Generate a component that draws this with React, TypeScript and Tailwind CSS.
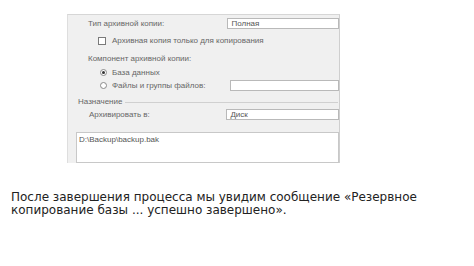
import React from 'react';

const Box: React.FC<{ w: string; children?: React.ReactNode }> = ({ w, children }) => (
  <div className={`${w} h-[11px] bg-white border border-[#b9b9b9] pl-[3px] flex items-center text-[#555]`}>
    {children}
  </div>
);

const Radio: React.FC<{ checked?: boolean }> = ({ checked }) => (
  <div className="w-[7px] h-[7px] rounded-full border border-[#8a8a8a] bg-white flex items-center justify-center">
    {checked && <div className="w-[3px] h-[3px] rounded-full bg-[#333]" />}
  </div>
);

const App: React.FC = () => {
  return (
    <div className="w-[474px] h-[266px] bg-white overflow-hidden">
      <div className="ml-[67px] mt-[14px] w-[273px] h-[149px] bg-[#f0f0f0] border-t border-l border-r border-t-[#d6d6d6] border-l-[#dedede] border-r-[#cfcfcf] flex flex-col text-[8px] leading-none text-[#666] font-['Liberation_Sans',sans-serif]">
        {/* archive type */}
        <div className="mt-[3px] flex items-center">
          <span className="w-[160px] pl-[20px]">Тип архивной копии:</span>
          <Box w="w-[112px]">Полная</Box>
        </div>
        <div className="mt-[7px] h-[9px] pl-[30px] flex items-center">
          <div className="w-[8px] h-[8px] border border-[#7a7a7a] bg-white" />
          <span className="ml-[6px]">Архивная копия только для копирования</span>
        </div>

        {/* component */}
        <div className="mt-[10px] pl-[20px]">Компонент архивной копии:</div>
        <div className="mt-[5px] h-[9px] pl-[32px] flex items-center">
          <Radio checked />
          <span className="ml-[5px]">База данных</span>
        </div>
        <div className="mt-[3px] flex items-center">
          <div className="w-[163px] pl-[32px] flex items-center">
            <Radio />
            <span className="ml-[5px]">Файлы и группы файлов:</span>
          </div>
          <Box w="w-[109px]" />
        </div>

        {/* destination */}
        <div className="mt-[7px] flex items-center pr-[1px]">
          <span className="pl-[10px] pr-[3px]">Назначение</span>
          <div className="flex-1 h-px bg-[#d0d0d0]" />
        </div>
        <div className="mt-[3px] flex items-center">
          <span className="w-[159px] pl-[21px]">Архивировать в:</span>
          <Box w="w-[113px]">Диск</Box>
        </div>
        <div className="mt-[12px] ml-[8px] flex-1 bg-white border border-[#c8c8c8] px-[2px] pt-[3px] text-[#555]">
          D:\Backup\backup.bak
        </div>
      </div>

      <p className="mt-[28px] px-[11px] text-[12px] leading-[13px] text-[#222] font-['DejaVu_Sans',sans-serif]">
        После завершения процесса мы увидим сообщение «Резервное копирование базы ... успешно завершено».
      </p>
    </div>
  );
};

export default App;
